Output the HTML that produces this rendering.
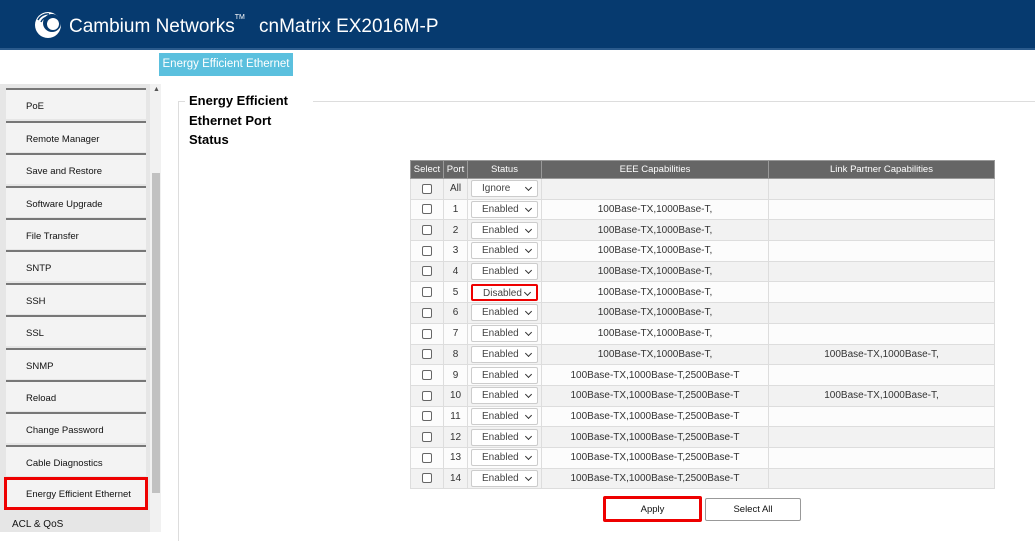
<!DOCTYPE html>
<html><head><style>
*{box-sizing:border-box;margin:0;padding:0}
body{width:1035px;height:532px;overflow:hidden;background:#fff;font-family:"Liberation Sans",Arial,sans-serif;position:relative}
.hdr{position:absolute;left:0;top:0;width:1035px;height:50px;background:#063a6f;border-bottom:2px solid #2a5a8c}
.logo{position:absolute;left:33px;top:10px}
.brand{position:absolute;left:69px;top:16px;color:#fff;font-size:19px}
.brand sup{font-size:7px;vertical-align:top;position:relative;top:-2px}
.model{position:absolute;left:259px;top:16px;color:#fff;font-size:19px}
.tab{position:absolute;left:159px;top:53px;width:134px;height:23px;background:#5bc0de;color:#fff;font-size:11.5px;text-align:center;line-height:23px}
.side{position:absolute;left:0;top:84px;width:150px;height:448px;background:#e6e6e6}
.item{position:absolute;left:6px;width:140px;height:31px;background:#f3f3f3;border-top:2px solid #777;font-size:9.5px;color:#111;padding-left:20px;line-height:33px}
.sb{position:absolute;left:150px;top:84px;width:11px;height:448px;background:#f1f1f1}
.thumb{position:absolute;left:152px;top:173px;width:8px;height:320px;background:#c1c1c1}
.fs{position:absolute;left:178px;top:101px;width:870px;height:440px;border-left:1px solid #ddd;border-top:1px solid #ddd}
.leg{position:absolute;left:185px;top:91px;background:#fff;padding:0 6px 0 4px;font-weight:bold;font-size:13px;line-height:19.5px;width:128px}
table{position:absolute;left:410px;top:160px;border-collapse:collapse;font-size:10px;color:#333}
th{background:#666;color:#fff;font-weight:normal;height:18px;border:1px solid #999;font-size:9.5px}
td{height:20.7px;border:1px solid #ddd;text-align:center;padding:0}
tr:nth-child(even) td{background:#f2f2f2}
tr:nth-child(odd) td{background:#fcfcfc}
.cb{display:inline-block;width:10px;height:10px;border:1px solid #666;border-radius:2px;background:#fff;vertical-align:middle}
.sel{display:inline-block;width:67px;height:17px;border:1px solid #ccc;border-radius:2px;background:#fff;text-align:left;padding-left:10px;line-height:15px;position:relative;vertical-align:middle;color:#444}
.sel:after{content:"";position:absolute;right:6px;top:4px;width:4px;height:4px;border-right:1.3px solid #333;border-bottom:1.3px solid #333;transform:rotate(45deg)}
.red{border:2px solid #e00 !important}
.btn{position:absolute;top:498px;height:22px;border:1px solid #999;border-radius:2px;background:#fff;font-size:9.5px;text-align:center;line-height:20px;color:#111}
</style></head><body>
<div class="hdr">
<svg class="logo" width="30" height="30" viewBox="0 0 30 30"><circle cx="15" cy="15" r="13" fill="#fff"/><circle cx="19" cy="13" r="9" fill="#063a6f"/><path d="M5 10 A11 11 0 0 1 16 4" stroke="#063a6f" stroke-width="1.5" fill="none"/><path d="M8 12 A8 8 0 0 1 15 7" stroke="#063a6f" stroke-width="1.5" fill="none"/><circle cx="20" cy="14" r="6" fill="#fff"/></svg>
<div class="brand">Cambium Networks<sup>TM</sup></div>
<div class="model">cnMatrix EX2016M-P</div>
</div>
<div class="tab">Energy Efficient Ethernet</div>
<div class="side"></div>
<div class="sb"></div><div class="thumb"></div>
<div style="position:absolute;left:153px;top:86px;font-size:7px;color:#555">▲</div>
<div class="item" style="top:88px">PoE</div>
<div class="item" style="top:121px">Remote Manager</div>
<div class="item" style="top:153px">Save and Restore</div>
<div class="item" style="top:186px">Software Upgrade</div>
<div class="item" style="top:218px">File Transfer</div>
<div class="item" style="top:250px">SNTP</div>
<div class="item" style="top:283px">SSH</div>
<div class="item" style="top:315px">SSL</div>
<div class="item" style="top:348px">SNMP</div>
<div class="item" style="top:380px">Reload</div>
<div class="item" style="top:412px">Change Password</div>
<div class="item" style="top:445px">Cable Diagnostics</div>
<div class="item" style="top:477px;border:3px solid #e00;left:4px;width:144px;height:33px;padding-left:19px;line-height:29px">Energy Efficient Ethernet</div>
<div style="position:absolute;left:12px;top:519px;font-size:10px;color:#111">ACL &amp; QoS</div>
<div class="fs"></div>
<div class="leg">Energy Efficient<br>Ethernet Port<br>Status</div>
<table>
<tr><th style="width:33px">Select</th><th style="width:24px">Port</th><th style="width:74px">Status</th><th style="width:227px">EEE Capabilities</th><th style="width:226px">Link Partner Capabilities</th></tr>
<tr><td><span class="cb"></span></td><td>All</td><td><span class="sel">Ignore</span></td><td></td><td></td></tr>
<tr><td><span class="cb"></span></td><td>1</td><td><span class="sel">Enabled</span></td><td>100Base-TX,1000Base-T,</td><td></td></tr>
<tr><td><span class="cb"></span></td><td>2</td><td><span class="sel">Enabled</span></td><td>100Base-TX,1000Base-T,</td><td></td></tr>
<tr><td><span class="cb"></span></td><td>3</td><td><span class="sel">Enabled</span></td><td>100Base-TX,1000Base-T,</td><td></td></tr>
<tr><td><span class="cb"></span></td><td>4</td><td><span class="sel">Enabled</span></td><td>100Base-TX,1000Base-T,</td><td></td></tr>
<tr><td><span class="cb"></span></td><td>5</td><td><span class="sel red">Disabled</span></td><td>100Base-TX,1000Base-T,</td><td></td></tr>
<tr><td><span class="cb"></span></td><td>6</td><td><span class="sel">Enabled</span></td><td>100Base-TX,1000Base-T,</td><td></td></tr>
<tr><td><span class="cb"></span></td><td>7</td><td><span class="sel">Enabled</span></td><td>100Base-TX,1000Base-T,</td><td></td></tr>
<tr><td><span class="cb"></span></td><td>8</td><td><span class="sel">Enabled</span></td><td>100Base-TX,1000Base-T,</td><td>100Base-TX,1000Base-T,</td></tr>
<tr><td><span class="cb"></span></td><td>9</td><td><span class="sel">Enabled</span></td><td>100Base-TX,1000Base-T,2500Base-T</td><td></td></tr>
<tr><td><span class="cb"></span></td><td>10</td><td><span class="sel">Enabled</span></td><td>100Base-TX,1000Base-T,2500Base-T</td><td>100Base-TX,1000Base-T,</td></tr>
<tr><td><span class="cb"></span></td><td>11</td><td><span class="sel">Enabled</span></td><td>100Base-TX,1000Base-T,2500Base-T</td><td></td></tr>
<tr><td><span class="cb"></span></td><td>12</td><td><span class="sel">Enabled</span></td><td>100Base-TX,1000Base-T,2500Base-T</td><td></td></tr>
<tr><td><span class="cb"></span></td><td>13</td><td><span class="sel">Enabled</span></td><td>100Base-TX,1000Base-T,2500Base-T</td><td></td></tr>
<tr><td><span class="cb"></span></td><td>14</td><td><span class="sel">Enabled</span></td><td>100Base-TX,1000Base-T,2500Base-T</td><td></td></tr>
</table>
<div class="btn" style="left:603px;width:99px;border:3px solid #e00;top:496px;height:26px;line-height:22px">Apply</div>
<div class="btn" style="left:705px;width:96px;height:23px;line-height:21px">Select All</div>
</body></html>
